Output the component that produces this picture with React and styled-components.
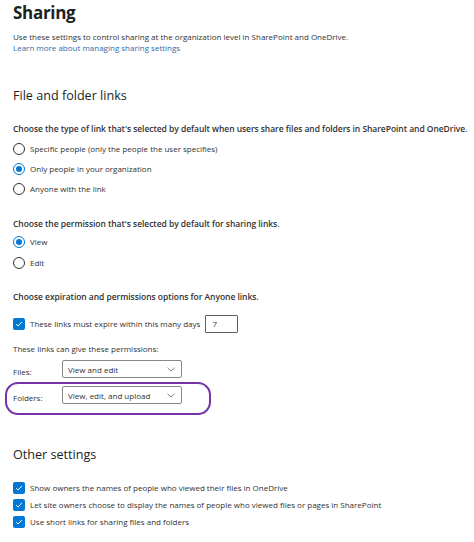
import React from 'react';
import styled, { createGlobalStyle } from 'styled-components';

const Global = createGlobalStyle`
  body {
    margin: 0;
    background: #fff;
    font-family: "Open Sans", "Liberation Sans", sans-serif;
    color: #323130;
  }
`

const Page = styled.div`
  padding: 0 0 0 13px;
  width: 474px;
  box-sizing: border-box;
`

const Title = styled.h1`
  margin: 0;
  padding-top: 1px;
  font-size: 17px;
  line-height: 24px;
  font-weight: 700;
  letter-spacing: -0.3px;
  color: #201f1e;
`

const Intro = styled.p`
  margin: 6px 0 0;
  font-size: 8px;
  line-height: 11px;
  color: #323130;
`

const Link = styled.a`
  color: #3469a6;
  text-decoration: none;
`

const SectionTitle = styled.h2`
  margin: ${({ $top }) => $top}px 0 0;
  font-size: 12.6px;
  line-height: 20px;
  font-weight: 400;
  color: #201f1e;
`

const Question = styled.div`
  margin: ${({ $top }) => $top}px 0 0;
  font-size: 8.5px;
  line-height: 12px;
  font-weight: 600;
  letter-spacing: -0.05px;
  color: #323130;
  white-space: nowrap;
`

const Options = styled.div`
  display: flex;
  flex-direction: column;
  gap: ${({ $gap }) => $gap}px;
  margin-top: ${({ $top }) => $top}px;
`

const Row = styled.label`
  display: flex;
  align-items: center;
  gap: 5px;
  font-size: 8px;
  line-height: 12px;
  color: #323130;
`

const RadioDot = styled.span`
  width: 12px;
  height: 12px;
  box-sizing: border-box;
  border-radius: 50%;
  border: 1px solid ${({ $on }) => ($on ? '#0078d4' : '#323130')};
  display: flex;
  align-items: center;
  justify-content: center;
  flex-shrink: 0;
  &::after {
    content: '';
    width: 6px;
    height: 6px;
    border-radius: 50%;
    background: ${({ $on }) => ($on ? '#0078d4' : 'transparent')};
  }
`

const Box = styled.span`
  width: 12px;
  height: 12px;
  border-radius: 2px;
  background: #0078d4;
  display: flex;
  align-items: center;
  justify-content: center;
  flex-shrink: 0;
`

const DaysInput = styled.span`
  width: 33px;
  height: 18px;
  box-sizing: border-box;
  border: 1px solid #605e5c;
  border-radius: 1px;
  padding-left: 6px;
  display: flex;
  align-items: center;
  font-size: 8px;
`

const Plain = styled.div`
  margin-top: ${({ $top }) => $top}px;
  font-size: 8px;
  line-height: 12px;
`

const PermRow = styled.div`
  display: flex;
  align-items: center;
  font-size: 8px;
  margin-top: ${({ $top }) => $top}px;
`

const PermLabel = styled.span`
  width: 49px;
  padding-top: 4px;
`

const Select = styled.div`
  width: 120px;
  height: 18px;
  box-sizing: border-box;
  border: 1px solid #8a8886;
  border-radius: 2px;
  display: flex;
  align-items: center;
  justify-content: space-between;
  padding: 0 6px 0 5px;
  font-size: 8px;
  color: #323130;
`

const Highlight = styled.div`
  margin: 4px 0 0 -8px;
  width: 206px;
  height: 33px;
  box-sizing: border-box;
  border: 2.5px solid #7533a9;
  border-radius: 13px;
  padding: 2px 0 0 6px;
  display: flex;
  align-items: flex-start;
`

const Check = () => (
  <Box>
    <svg width="8" height="8" viewBox="0 0 8 8" fill="none">
      <path d="M1.2 4.2 L3.1 6 L6.8 2" stroke="#fff" strokeWidth="1" />
    </svg>
  </Box>
)

const Chevron = () => (
  <svg width="8" height="5" viewBox="0 0 8 5" fill="none">
    <path d="M0.5 0.8 L4 4 L7.5 0.8" stroke="#605e5c" strokeWidth="0.8" />
  </svg>
)

const Radio = ({ on, children }) => (
  <Row>
    <RadioDot $on={on} />
    {children}
  </Row>
)

const CheckRow = ({ children, extra }) => (
  <Row>
    <Check />
    {children}
    {extra}
  </Row>
)

export default function App() {
  return (
    <Page>
      <Global />
      <Title>Sharing</Title>
      <Intro>
        Use these settings to control sharing at the organization level in SharePoint and OneDrive.
        <br />
        <Link href="#">Learn more about managing sharing settings</Link>
      </Intro>

      <SectionTitle $top={33}>File and folder links</SectionTitle>

      <Question $top={17}>
        Choose the type of link that's selected by default when users share files and folders in SharePoint and OneDrive.
      </Question>
      <Options $gap={8} $top={8}>
        <Radio>Specific people (only the people the user specifies)</Radio>
        <Radio on>Only people in your organization</Radio>
        <Radio>Anyone with the link</Radio>
      </Options>

      <Question $top={23}>Choose the permission that's selected by default for sharing links.</Question>
      <Options $gap={9} $top={6}>
        <Radio on>View</Radio>
        <Radio>Edit</Radio>
      </Options>

      <Question $top={22}>Choose expiration and permissions options for Anyone links.</Question>
      <Options $gap={0} $top={12}>
        <CheckRow extra={<DaysInput>7</DaysInput>}>These links must expire within this many days</CheckRow>
      </Options>

      <Plain $top={10}>These links can give these permissions:</Plain>
      <PermRow $top={5}>
        <PermLabel>Files:</PermLabel>
        <Select>View and edit<Chevron /></Select>
      </PermRow>
      <Highlight>
        <PermRow $top={0}>
          <PermLabel>Folders:</PermLabel>
          <Select>View, edit, and upload<Chevron /></Select>
        </PermRow>
      </Highlight>

      <SectionTitle $top={30}>Other settings</SectionTitle>
      <Options $gap={5} $top={17}>
        <CheckRow>Show owners the names of people who viewed their files in OneDrive</CheckRow>
        <CheckRow>Let site owners choose to display the names of people who viewed files or pages in SharePoint</CheckRow>
        <CheckRow>Use short links for sharing files and folders</CheckRow>
      </Options>
    </Page>
  );
}
